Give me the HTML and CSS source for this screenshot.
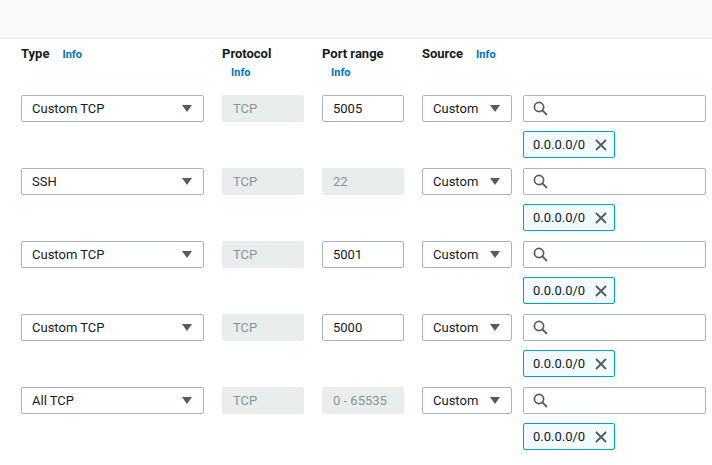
FILE: index.html
```html
<!DOCTYPE html>
<html>
<head>
<meta charset="utf-8">
<link rel="stylesheet" href="styles.css">
</head>
<body>
<div class="topbar"></div>
<div class="table">
  <div class="head">
    <div class="hcell"><span class="label">Type</span><a class="info">Info</a></div>
    <div class="hcell stack"><span class="label">Protocol</span><a class="info">Info</a></div>
    <div class="hcell stack"><span class="label">Port range</span><a class="info">Info</a></div>
    <div class="hcell"><span class="label">Source</span><a class="info">Info</a></div>
    <div class="hcell"></div>
  </div>

  <div class="row">
    <div class="select type"><span>Custom TCP</span><i class="caret"></i></div>
    <div class="field disabled">TCP</div>
    <div class="field">5005</div>
    <div class="select source"><span>Custom</span><i class="caret"></i></div>
    <div class="srccol">
      <div class="search"><svg width="15" height="15" viewBox="0 0 15 15"><circle cx="6" cy="6" r="4.6" fill="none" stroke="#545b64" stroke-width="1.7"/><path d="M9.4 9.4 L13.4 13.4" stroke="#545b64" stroke-width="2" stroke-linecap="round"/></svg></div>
      <div class="token"><span>0.0.0.0/0</span><svg width="12" height="12" viewBox="0 0 12 12"><path d="M1 1 L11 11 M11 1 L1 11" stroke="#545b64" stroke-width="1.8"/></svg></div>
    </div>
  </div>

  <div class="row">
    <div class="select type"><span>SSH</span><i class="caret"></i></div>
    <div class="field disabled">TCP</div>
    <div class="field disabled">22</div>
    <div class="select source"><span>Custom</span><i class="caret"></i></div>
    <div class="srccol">
      <div class="search"><svg width="15" height="15" viewBox="0 0 15 15"><circle cx="6" cy="6" r="4.6" fill="none" stroke="#545b64" stroke-width="1.7"/><path d="M9.4 9.4 L13.4 13.4" stroke="#545b64" stroke-width="2" stroke-linecap="round"/></svg></div>
      <div class="token"><span>0.0.0.0/0</span><svg width="12" height="12" viewBox="0 0 12 12"><path d="M1 1 L11 11 M11 1 L1 11" stroke="#545b64" stroke-width="1.8"/></svg></div>
    </div>
  </div>

  <div class="row">
    <div class="select type"><span>Custom TCP</span><i class="caret"></i></div>
    <div class="field disabled">TCP</div>
    <div class="field">5001</div>
    <div class="select source"><span>Custom</span><i class="caret"></i></div>
    <div class="srccol">
      <div class="search"><svg width="15" height="15" viewBox="0 0 15 15"><circle cx="6" cy="6" r="4.6" fill="none" stroke="#545b64" stroke-width="1.7"/><path d="M9.4 9.4 L13.4 13.4" stroke="#545b64" stroke-width="2" stroke-linecap="round"/></svg></div>
      <div class="token"><span>0.0.0.0/0</span><svg width="12" height="12" viewBox="0 0 12 12"><path d="M1 1 L11 11 M11 1 L1 11" stroke="#545b64" stroke-width="1.8"/></svg></div>
    </div>
  </div>

  <div class="row">
    <div class="select type"><span>Custom TCP</span><i class="caret"></i></div>
    <div class="field disabled">TCP</div>
    <div class="field">5000</div>
    <div class="select source"><span>Custom</span><i class="caret"></i></div>
    <div class="srccol">
      <div class="search"><svg width="15" height="15" viewBox="0 0 15 15"><circle cx="6" cy="6" r="4.6" fill="none" stroke="#545b64" stroke-width="1.7"/><path d="M9.4 9.4 L13.4 13.4" stroke="#545b64" stroke-width="2" stroke-linecap="round"/></svg></div>
      <div class="token"><span>0.0.0.0/0</span><svg width="12" height="12" viewBox="0 0 12 12"><path d="M1 1 L11 11 M11 1 L1 11" stroke="#545b64" stroke-width="1.8"/></svg></div>
    </div>
  </div>

  <div class="row">
    <div class="select type"><span>All TCP</span><i class="caret"></i></div>
    <div class="field disabled">TCP</div>
    <div class="field disabled">0 - 65535</div>
    <div class="select source"><span>Custom</span><i class="caret"></i></div>
    <div class="srccol">
      <div class="search"><svg width="15" height="15" viewBox="0 0 15 15"><circle cx="6" cy="6" r="4.6" fill="none" stroke="#545b64" stroke-width="1.7"/><path d="M9.4 9.4 L13.4 13.4" stroke="#545b64" stroke-width="2" stroke-linecap="round"/></svg></div>
      <div class="token"><span>0.0.0.0/0</span><svg width="12" height="12" viewBox="0 0 12 12"><path d="M1 1 L11 11 M11 1 L1 11" stroke="#545b64" stroke-width="1.8"/></svg></div>
    </div>
  </div>
</div>
</body>
</html>
```

FILE: styles.css
```css
* { box-sizing: border-box; }
html, body { margin: 0; padding: 0; background: #fff; }
body {
  font-family: Roboto, "Liberation Sans", sans-serif;
  font-size: 13px;
  color: #16191f;
  width: 712px;
  height: 465px;
  overflow: hidden;
}
.topbar {
  height: 39px;
  background: #fafafa;
  border-bottom: 1px solid #eaeded;
}
.table {
  padding-left: 21px;
}
.head, .row {
  display: grid;
  grid-template-columns: 201px 100px 100px 101px 183px;
}
.head {
  padding-top: 7px;
  height: 56px;
}
.hcell {
  display: flex;
  align-items: baseline;
  gap: 13px;
  line-height: 15px;
}
.hcell.stack {
  flex-direction: column;
  align-items: flex-start;
  gap: 4px;
}
.hcell.stack .info { margin-left: 9px; }
.label {
  font-weight: bold;
  font-size: 13px;
}
.info {
  color: #0073bb;
  font-weight: bold;
  font-size: 11px;
}
.row {
  height: 73px;
  align-items: start;
}
.select, .field, .search {
  height: 27px;
  border: 1px solid #aab7b8;
  border-radius: 2px;
  display: flex;
  align-items: center;
  padding: 0 10px;
  background: #fff;
}
.select { justify-content: space-between; }
.type { width: 183px; }
.source { width: 90px; }
.field { width: 82px; }
.field.disabled {
  background: #eaeded;
  border-color: #eaeded;
  color: #879596;
}
.caret {
  width: 0; height: 0;
  border-left: 5.5px solid transparent;
  border-right: 5.5px solid transparent;
  border-top: 7px solid #545b64;
  margin-right: 1px;
}
.srccol {
  display: flex;
  flex-direction: column;
  gap: 9px;
}
.search {
  width: 183px;
  padding-left: 9px;
}
.token {
  width: 92px;
  height: 27px;
  border: 1px solid #00a1c9;
  border-radius: 2px;
  background: #f1faff;
  display: flex;
  align-items: center;
  padding: 0 7px 0 9px;
  justify-content: space-between;
}
```
